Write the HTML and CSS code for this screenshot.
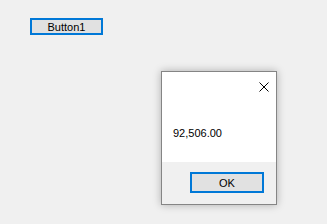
FILE: index.html
```html
<!DOCTYPE html>
<html>
<head>
<meta charset="utf-8">
<link rel="stylesheet" href="styles.css">
</head>
<body>
<div class="form">
  <button class="btn btn-main">Button1</button>
</div>
<div class="dialog">
  <div class="dialog-body">
    <div class="close">
      <svg width="10" height="10" viewBox="0 0 10 10"><path d="M0.5 0.5 L9.5 9.5 M9.5 0.5 L0.5 9.5" stroke="#000" stroke-width="1" fill="none"/></svg>
    </div>
    <div class="message">92,506.00</div>
  </div>
  <div class="dialog-footer">
    <button class="btn btn-ok">OK</button>
  </div>
</div>
</body>
</html>
```
FILE: styles.css
```css
html, body {
  margin: 0;
  padding: 0;
  background: #f0f0f0;
  width: 327px;
  height: 224px;
  overflow: hidden;
  font-family: "Segoe UI", "Liberation Sans", Arial, sans-serif;
  font-size: 11px;
  color: #000;
}
.form {
  padding: 18px 0 0 30px;
}
.btn {
  display: flex;
  align-items: center;
  justify-content: center;
  box-sizing: border-box;
  background: #e1e1e1;
  border: 2px solid #0078d7;
  padding: 0;
  margin: 0;
  font-family: inherit;
  font-size: 11px;
  color: #000;
}
.btn-main {
  width: 73px;
  height: 17px;
}
.dialog {
  position: absolute;
  left: 161px;
  top: 71px;
  width: 116px;
  height: 134px;
  box-sizing: border-box;
  border: 1px solid #858585;
  background: #fff;
  box-shadow: 0 0 8px rgba(0,0,0,0.28);
  display: flex;
  flex-direction: column;
}
.dialog-body {
  height: 90px;
  display: flex;
  flex-direction: column;
}
.close {
  align-self: flex-end;
  margin: 10px 7px 0 0;
  width: 10px;
  height: 10px;
}
.close svg { display: block; }
.message {
  margin: 35px 0 0 11px;
  line-height: 13px;
}
.dialog-footer {
  flex: 1;
  background: #f0f0f0;
  padding: 10px 0 0 28px;
}
.btn-ok {
  width: 74px;
  height: 21px;
}
```
